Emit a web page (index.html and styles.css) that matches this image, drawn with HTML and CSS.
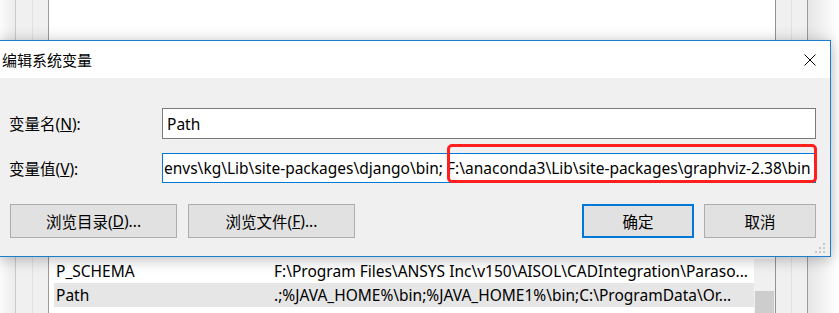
FILE: index.html
```html
<!DOCTYPE html>
<html lang="zh">
<head>
<meta charset="utf-8">
<title>编辑系统变量</title>
<link rel="stylesheet" href="styles.css">
</head>
<body>
<div class="desk">
  <div class="strip strip-shadow-l"></div>
  <div class="strip strip-a"></div>
  <div class="strip strip-b"></div>
  <div class="panel">
    <div class="panel-top"></div>
    <div class="list">
      <div class="rows">
        <div class="row"><span class="c1">P_SCHEMA</span><span class="c2">F:\Program Files\ANSYS Inc\v150\AISOL\CADIntegration\Paraso...</span></div>
        <div class="row sel"><span class="c1">Path</span><span class="c2">.;%JAVA_HOME%\bin;%JAVA_HOME1%\bin;C:\ProgramData\Or...</span></div>
      </div>
      <div class="scroll"><div class="thumb"></div></div>
    </div>
  </div>
  <div class="strip strip-c"></div>
  <div class="strip strip-d"></div>
  <div class="strip-shadow-r"></div>
</div>

<div class="dialog">
  <div class="titlebar">
    <span class="title">编辑系统变量</span>
    <span class="close">
      <svg width="12" height="12" viewBox="0 0 12 12"><path d="M0.5 0.5 L11.5 11.5 M11.5 0.5 L0.5 11.5" stroke="#000" stroke-width="1" fill="none"/></svg>
    </span>
  </div>
  <div class="body">
    <div class="field">
      <label class="lbl">变量名(<u>N</u>):</label>
      <div class="input">Path</div>
    </div>
    <div class="field">
      <label class="lbl">变量值(<u>V</u>):</label>
      <div class="input focus"><span class="val">envs\kg\Lib\site-packages\django\bin; F:\anaconda3\Lib\site-packages\graphviz-2.38\bin</span></div>
    </div>
    <div class="buttons">
      <div class="btn wide">浏览目录(<u>D</u>)...</div>
      <div class="btn wide">浏览文件(<u>F</u>)...</div>
      <div class="spacer"></div>
      <div class="btn def">确定</div>
      <div class="btn">取消</div>
    </div>
    <div class="grip">
      <svg width="12" height="12" viewBox="0 0 12 12" fill="#c8c8c8">
        <rect x="8" y="0" width="2" height="2"/>
        <rect x="4" y="4" width="2" height="2"/><rect x="8" y="4" width="2" height="2"/>
        <rect x="0" y="8" width="2" height="2"/><rect x="4" y="8" width="2" height="2"/><rect x="8" y="8" width="2" height="2"/>
      </svg>
    </div>
  </div>
  <div class="mark"></div>
</div>
</body>
</html>
```

FILE: styles.css
```css
* { box-sizing: border-box; }
html, body {
  margin: 0;
  padding: 0;
  width: 839px;
  height: 313px;
  overflow: hidden;
  background: #fff;
  font-family: "Noto Sans", "Noto Sans CJK SC", sans-serif;
  font-size: 15.5px;
  color: #000;
}
body { position: relative; }

.desk {
  display: flex;
  height: 313px;
}
.strip { height: 100%; }
.strip-shadow-l {
  width: 16px;
  background: linear-gradient(to right, #fbfbfb, #ececec);
  border-right: 1px solid #c9c9c9;
}
.strip-a {
  width: 17px;
  background: #f0f0f0;
  border-right: 1px solid #e0e0e0;
}
.strip-b {
  width: 16px;
  background: #f0f0f0;
  border-right: 1px solid #9a9a9a;
}
.panel {
  width: 727px;
  background: #fff;
  display: flex;
  flex-direction: column;
  border-right: 1px solid #8f949a;
}
.panel-top { height: 259px; }
.list {
  flex: 1;
  display: flex;
}
.rows {
  flex: 1;
  padding-left: 5px;
}
.row {
  height: 24px;
  display: flex;
  align-items: center;
  white-space: nowrap;
  overflow: hidden;
}
.row.sel { background: #e6e6e6; }
.c1 { width: 220px; padding-left: 2px; }
.c2 { flex: 1; }
.scroll {
  width: 21px;
  background: #f0f0f0;
  padding: 32px 1px 0 1px;
}
.thumb { height: 100%; background: #cdcdcd; }
.strip-c {
  width: 16px;
  background: #f0f0f0;
  border-right: 1px solid #e0e0e0;
}
.strip-d {
  width: 16px;
  background: #f0f0f0;
  border-right: 1px solid #9a9a9a;
}
.strip-shadow-r {
  flex: 1;
  background: linear-gradient(to right, #e6e6e6, #fff 30px);
}

.dialog {
  position: absolute;
  left: -1px;
  top: 40px;
  width: 832px;
  height: 217px;
  border: 1px solid #1a7fd4;
  background: #f0f0f0;
  box-shadow: 0 2px 14px rgba(0, 0, 0, 0.28);
  display: flex;
  flex-direction: column;
}
.titlebar {
  height: 37px;
  background: #fff;
  display: flex;
  align-items: center;
  justify-content: space-between;
}
.title {
  padding-left: 2px;
  font-size: 15px;
}
.close {
  width: 40px;
  height: 37px;
  display: flex;
  align-items: center;
  justify-content: center;
}
.body {
  flex: 1;
  padding: 30px 14px 0 9px;
  position: relative;
}
.field {
  display: flex;
  align-items: center;
  margin-bottom: 14px;
}
.field + .field { margin-bottom: 21px; }
.lbl { width: 153px; }
.input {
  width: 654px;
  height: 31px;
  border: 1px solid #7a7a7a;
  background: #fff;
  padding-left: 4px;
  display: flex;
  align-items: center;
  white-space: nowrap;
  overflow: hidden;
}
.input.focus {
  height: 30px;
  border-color: #0078d7;
  padding-left: 1px;
}
.val { letter-spacing: 0; }
.buttons {
  display: flex;
  padding-left: 1px;
}
.btn {
  width: 112px;
  height: 34px;
  background: #e1e1e1;
  border: 1px solid #adadad;
  display: flex;
  align-items: center;
  justify-content: center;
  margin-left: 10px;
}
.btn.wide { width: 167px; margin-left: 0; margin-right: 11px; }
.btn.def { border: 2px solid #0078d7; }
.spacer { flex: 1; }
.grip {
  position: absolute;
  right: 3px;
  bottom: 1px;
  line-height: 0;
}
.mark {
  position: absolute;
  left: 447px;
  top: 103px;
  width: 370px;
  height: 39px;
  border: 3.5px solid #ff1f1f;
  border-radius: 5px;
}
```
